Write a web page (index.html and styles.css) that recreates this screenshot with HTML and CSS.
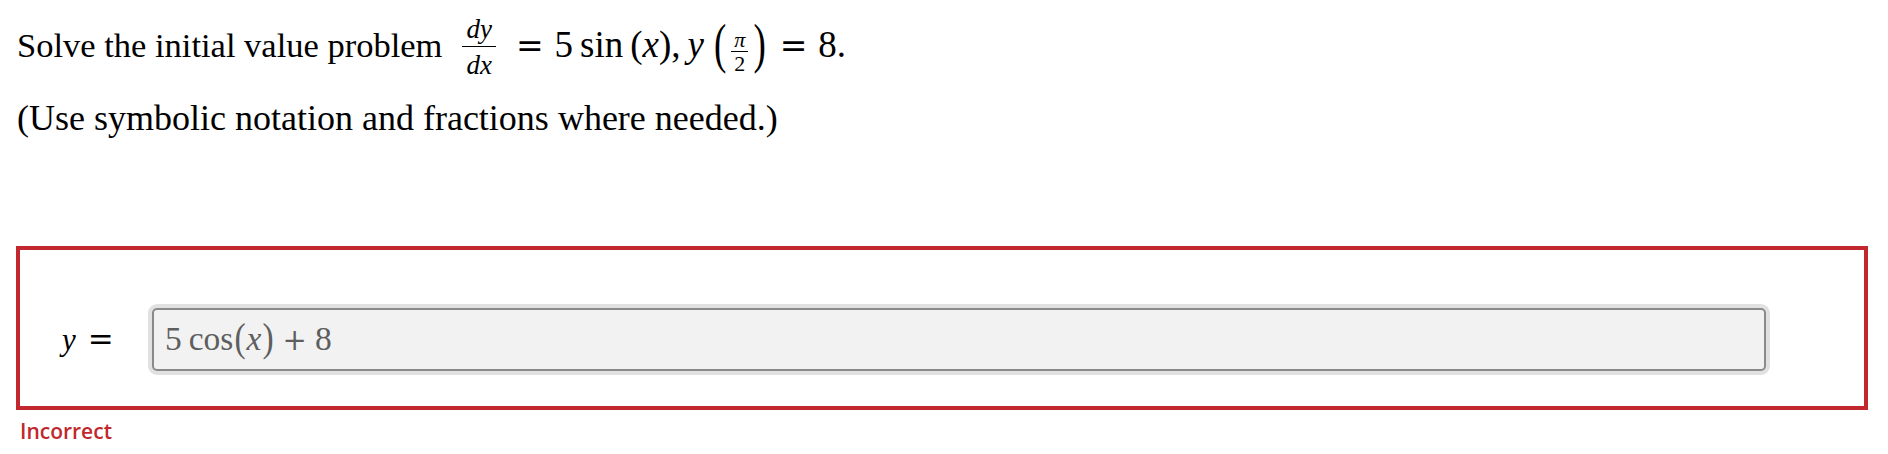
FILE: index.html
```html
<!DOCTYPE html>
<html>
<head>
<meta charset="utf-8">
<link rel="stylesheet" href="styles.css">
</head>
<body>
<div class="page">
  <div class="question">
    <div class="line l1">Solve the initial value problem<span class="m"><span class="frac f1"><span class="num"><i>dy</i></span><span class="den"><i>dx</i></span></span><span class="rel">=</span>5<span class="th"></span>sin<span class="th"></span>(<i>x</i>),<span class="th"></span><i>y</i><span class="th"></span><span class="bp">(</span><span class="frac f2"><span class="num"><i>π</i></span><span class="den">2</span></span><span class="bp">)</span><span class="rel">=</span>8.</span></div>
    <div class="line l2">(Use symbolic notation and fractions where needed.)</div>
  </div>
  <div class="answer">
    <div class="label"><i>y</i><span class="rel">=</span></div>
    <div class="input"><span class="val">5<span class="th"></span>cos<span class="sp">(</span><i>x</i><span class="sp">)</span><span class="bin">+</span>8</span></div>
  </div>
  <div class="feedback">Incorrect</div>
</div>
</body>
</html>
```
FILE: styles.css
```css
html, body {
  margin: 0;
  padding: 0;
  background: #ffffff;
}
.page {
  padding: 0 20px 0 16px;
  font-family: "Liberation Serif", "Times New Roman", serif;
  color: #000;
}
.question {
  padding-left: 1px;
  font-size: 34.5px;
}
.line {
  white-space: nowrap;
}
.l1 {
  height: 80px;
  line-height: 80px;
  padding-top: 5px;
}
.l2 {
  height: 40px;
  line-height: 40px;
  font-size: 36px;
  margin-top: 13px;
}
i {
  font-style: italic;
}
.m {
  font-size: 37px;
}
.frac {
  display: inline-block;
  text-align: center;
  line-height: 1;
}
.frac .num,
.frac .den {
  display: block;
}
.f1 {
  font-size: 27px;
  vertical-align: -17px;
  margin: 0 9px 0 20px;
}
.f1 .num {
  border-bottom: 1.5px solid #000;
  padding: 0 4px 6px;
  line-height: 22px;
}
.f1 .den {
  line-height: 22px;
  padding-top: 7px;
}
.f2 {
  font-size: 22px;
  vertical-align: -14px;
  margin: 0 2px;
}
.f2 .num {
  border-bottom: 1.3px solid #000;
  padding: 0 3px 2px;
  line-height: 18px;
}
.f2 .den {
  line-height: 18px;
  padding-top: 3px;
}
.bp {
  display: inline-block;
  line-height: 1;
  transform: scaleY(1.5);
  transform-origin: 50% 58%;
  margin: 0 3px;
}
.rel {
  display: inline-block;
  font-family: "DejaVu Serif", serif;
  font-size: 33px;
  margin: 0 11px;
}
.th {
  display: inline-block;
  width: 7px;
}
.answer {
  margin-top: 108px;
  border: 4px solid #c1282d;
  height: 164px;
  box-sizing: border-box;
  padding: 58px 98px 0 42px;
  display: flex;
  align-items: baseline;
}
.label {
  width: 90px;
  flex: none;
  font-size: 31px;
  white-space: nowrap;
}
.label .rel {
  font-size: 31px;
  margin: 0 0 0 12px;
}
.input {
  flex: none;
  width: 1614px;
  height: 63px;
  box-sizing: border-box;
  border: 2px solid #8a8a8a;
  border-radius: 5px;
  background: #f2f2f2;
  box-shadow: 0 0 0 4px #e1e1e1;
  padding: 9px 0 0 11px;
  line-height: 40px;
}
.val {
  font-size: 33.5px;
  color: #5e5e5e;
  white-space: nowrap;
}
.sp {
  display: inline-block;
  transform: scaleY(1.18);
  transform-origin: 50% 65%;
  margin: 0 1px;
}
.bin {
  display: inline-block;
  font-family: "DejaVu Serif", serif;
  font-size: 29px;
  margin: 0 8px;
}
.feedback {
  margin-top: 7px;
  padding-left: 4px;
  font-family: "Open Sans", sans-serif;
  font-weight: 600;
  font-size: 21px;
  line-height: 28px;
  color: #c1282d;
}
```
